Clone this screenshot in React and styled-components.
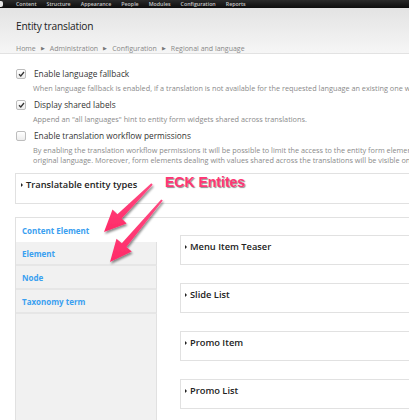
import React from 'react';
import styled, { createGlobalStyle } from 'styled-components';

const GlobalStyle = createGlobalStyle`
  html, body {
    margin: 0;
    padding: 0;
    background: #fff;
    overflow: hidden;
  }
  body {
    font-family: "Open Sans", "Liberation Sans", sans-serif;
    color: #333;
  }
`;

const Page = styled.div`
  position: relative;
  width: 409px;
  height: 420px;
  overflow: hidden;
`;

const Toolbar = styled.div`
  height: 8px;
  background: linear-gradient(#2a2a2a, #0d0d0d);
  display: flex;
  align-items: center;
  padding-left: 16px;
  gap: 10px;
  position: relative;
`;

const HomeIcon = styled.span`
  position: absolute;
  left: -3px;
  top: 1px;
  width: 6px;
  height: 6px;
  border-radius: 2px;
  background: #e8e8e8;
`;

const ToolbarItem = styled.span`
  color: #c8c8c8;
  font-size: 5.3px;
  font-weight: 600;
  line-height: 8px;
  white-space: nowrap;
`;

const Header = styled.div`
  height: 46px;
  background: linear-gradient(#e3e3e3, #f6f6f6);
  border-bottom: 1px solid #e2e2e2;
  padding: 10px 16px 0;
  box-sizing: border-box;
`;

const Title = styled.h1`
  margin: 0;
  font-size: 10.2px;
  letter-spacing: -0.2px;
  font-weight: 400;
  color: #222;
  line-height: 16px;
`;

const Breadcrumb = styled.div`
  display: flex;
  align-items: center;
  gap: 5px;
  margin-top: 10px;
  font-size: 7px;
  line-height: 9px;
  color: #888;
  white-space: nowrap;
`;

const Sep = styled.span`
  font-size: 4.5px;
  color: #777;
`;

const Content = styled.div`
  width: 470px;
  padding: 14px 0 0 15px;
`;

const Option = styled.div`
  margin-bottom: ${(p) => p.$gap}px;
`;

const OptionRow = styled.label`
  display: flex;
  align-items: center;
  gap: 8px;
  height: 12px;
  padding-left: 1px;
`;

const Box = styled.span`
  width: 8px;
  height: 8px;
  border: 1px solid #bdbdbd;
  border-radius: 2px;
  background: linear-gradient(#fff, #ececec);
  display: flex;
  align-items: center;
  justify-content: center;
`;

const OptionLabel = styled.span`
  font-size: 8.3px;
  line-height: 12px;
  color: #333;
  white-space: nowrap;
`;

const Help = styled.div`
  padding-left: 18px;
  margin-top: 3px;
  font-size: 7.3px;
  line-height: 10px;
  color: #8a8a8a;
  white-space: nowrap;
`;

const Fieldset = styled.div`
  height: 31px;
  box-sizing: border-box;
  border: 1px solid #e1e1e1;
  border-right: none;
  padding: 5px 5px;
  display: flex;
  align-items: flex-start;
`;

const Legend = styled.span`
  display: flex;
  align-items: center;
  gap: 3px;
  font-size: 9.3px;
  font-weight: 600;
  color: #222;
  white-space: nowrap;
  line-height: 12px;
`;

const Caret = styled.span`
  width: 0;
  height: 0;
  border-top: 2px solid transparent;
  border-bottom: 2px solid transparent;
  border-left: 2.5px solid #222;
`;

const VerticalTabs = styled.div`
  margin-top: 13px;
  border-top: 1px solid #e1e1e1;
  border-left: 1px solid #e1e1e1;
  display: flex;
  height: 204px;
`;

const TabList = styled.div`
  width: 141px;
  flex-shrink: 0;
  display: flex;
  flex-direction: column;
`;

const Tab = styled.div`
  height: 24px;
  flex-shrink: 0;
  box-sizing: border-box;
  border-bottom: 2px solid #e6e6e6;
  border-right: 1px solid ${(p) => (p.$active ? '#fff' : '#e1e1e1')};
  background: ${(p) => (p.$active ? '#fff' : '#f1f1f1')};
  padding-left: 6px;
  display: flex;
  align-items: center;
  font-size: 8px;
  font-weight: 700;
  color: #3aa0f0;
  white-space: nowrap;
  ${(p) => p.$active && 'border-bottom: none;'}
`;

const TabFill = styled.div`
  flex: 1;
  background: #f1f1f1;
  border-right: 1px solid #e1e1e1;
`;

const Pane = styled.div`
  flex: 1;
  padding: 17px 0 0 23px;
  display: flex;
  flex-direction: column;
  gap: 18px;
`;

const PaneFieldset = styled(Fieldset)`
  height: 30px;
  padding: 5px 4px;
`;

const Overlay = styled.svg`
  position: absolute;
  left: 0;
  top: 0;
  pointer-events: none;
`;

const Callout = styled.div`
  position: absolute;
  left: 165px;
  top: 174px;
  font-family: "Liberation Sans", Arial, sans-serif;
  font-size: 14px;
  font-weight: 700;
  color: #ff3575;
  text-shadow: 1px 1px 1px rgba(0, 0, 0, 0.45);
  white-space: nowrap;
`;

const menu = ['Content', 'Structure', 'Appearance', 'People', 'Modules', 'Configuration', 'Reports'];
const crumbs = ['Home', 'Administration', 'Configuration', 'Regional and language'];
const tabs = ['Content Element', 'Element', 'Node', 'Taxonomy term'];
const bundles = ['Menu Item Teaser', 'Slide List', 'Promo Item', 'Promo List'];

const options = [
  {
    label: 'Enable language fallback',
    checked: true,
    help: ['When language fallback is enabled, if a translation is not available for the requested language an existing one will be displayed.'],
    gap: 6,
  },
  {
    label: 'Display shared labels',
    checked: true,
    help: ['Append an "all languages" hint to entity form widgets shared across translations.'],
    gap: 6,
  },
  {
    label: 'Enable translation workflow permissions',
    checked: false,
    help: [
      'By enabling the translation workflow permissions it will be possible to limit the access to the entity form elements.',
      'original language. Moreover, form elements dealing with values shared across the translations will be visible only',
    ],
    gap: 8,
  },
];

// polygon for a tapered arrow from tail to tip
const arrowPoints = (tail, tip, head = 22, half = 10) => {
  const dx = tip[0] - tail[0];
  const dy = tip[1] - tail[1];
  const len = Math.hypot(dx, dy);
  const ux = dx / len;
  const uy = dy / len;
  const nx = -uy;
  const ny = ux;
  const bx = tip[0] - ux * head;
  const by = tip[1] - uy * head;
  const pts = [
    [tail[0] + nx * 1, tail[1] + ny * 1],
    [bx + nx * 3, by + ny * 3],
    [bx + nx * half, by + ny * half],
    tip,
    [bx - nx * half, by - ny * half],
    [bx - nx * 3, by - ny * 3],
    [tail[0] - nx * 1, tail[1] - ny * 1],
  ];
  return pts.map((p) => p.map((v) => v.toFixed(1)).join(',')).join(' ');
};

const Check = () => (
  <svg width="7" height="6" viewBox="0 0 7 6">
    <path d="M1 3.2 L2.8 5 L6 1" fill="none" stroke="#333" strokeWidth="1.3" />
  </svg>
);

export default function App() {
  return (
    <Page>
      <GlobalStyle />
      <Toolbar>
        <HomeIcon />
        {menu.map((m) => (
          <ToolbarItem key={m}>{m}</ToolbarItem>
        ))}
      </Toolbar>
      <Header>
        <Title>Entity translation</Title>
        <Breadcrumb>
          {crumbs.map((c, i) => (
            <React.Fragment key={c}>
              {i > 0 && <Sep>▶</Sep>}
              <span>{c}</span>
            </React.Fragment>
          ))}
        </Breadcrumb>
      </Header>
      <Content>
        {options.map((o) => (
          <Option key={o.label} $gap={o.gap}>
            <OptionRow>
              <Box>{o.checked && <Check />}</Box>
              <OptionLabel>{o.label}</OptionLabel>
            </OptionRow>
            <Help>
              {o.help.map((h) => (
                <div key={h}>{h}</div>
              ))}
            </Help>
          </Option>
        ))}
        <Fieldset>
          <Legend>
            <Caret />
            Translatable entity types
          </Legend>
        </Fieldset>
        <VerticalTabs>
          <TabList>
            {tabs.map((t, i) => (
              <Tab key={t} $active={i === 0}>
                {t}
              </Tab>
            ))}
            <TabFill />
          </TabList>
          <Pane>
            {bundles.map((b) => (
              <PaneFieldset key={b}>
                <Legend>
                  <Caret />
                  {b}
                </Legend>
              </PaneFieldset>
            ))}
          </Pane>
        </VerticalTabs>
      </Content>
      <Callout>ECK Entites</Callout>
      <Overlay width="409" height="420">
        <defs>
          <filter id="shadow" x="-20%" y="-20%" width="140%" height="140%">
            <feDropShadow dx="1" dy="2" stdDeviation="1.2" floodColor="#000" floodOpacity="0.45" />
          </filter>
          <linearGradient id="pink" x1="0" y1="0" x2="0" y2="1">
            <stop offset="0" stopColor="#ff4a82" />
            <stop offset="1" stopColor="#ff2a68" />
          </linearGradient>
        </defs>
        <polygon points={arrowPoints([152, 184], [104, 232])} fill="url(#pink)" filter="url(#shadow)" />
        <polygon points={arrowPoints([162, 200], [110, 262])} fill="url(#pink)" filter="url(#shadow)" />
      </Overlay>
    </Page>
  );
}
